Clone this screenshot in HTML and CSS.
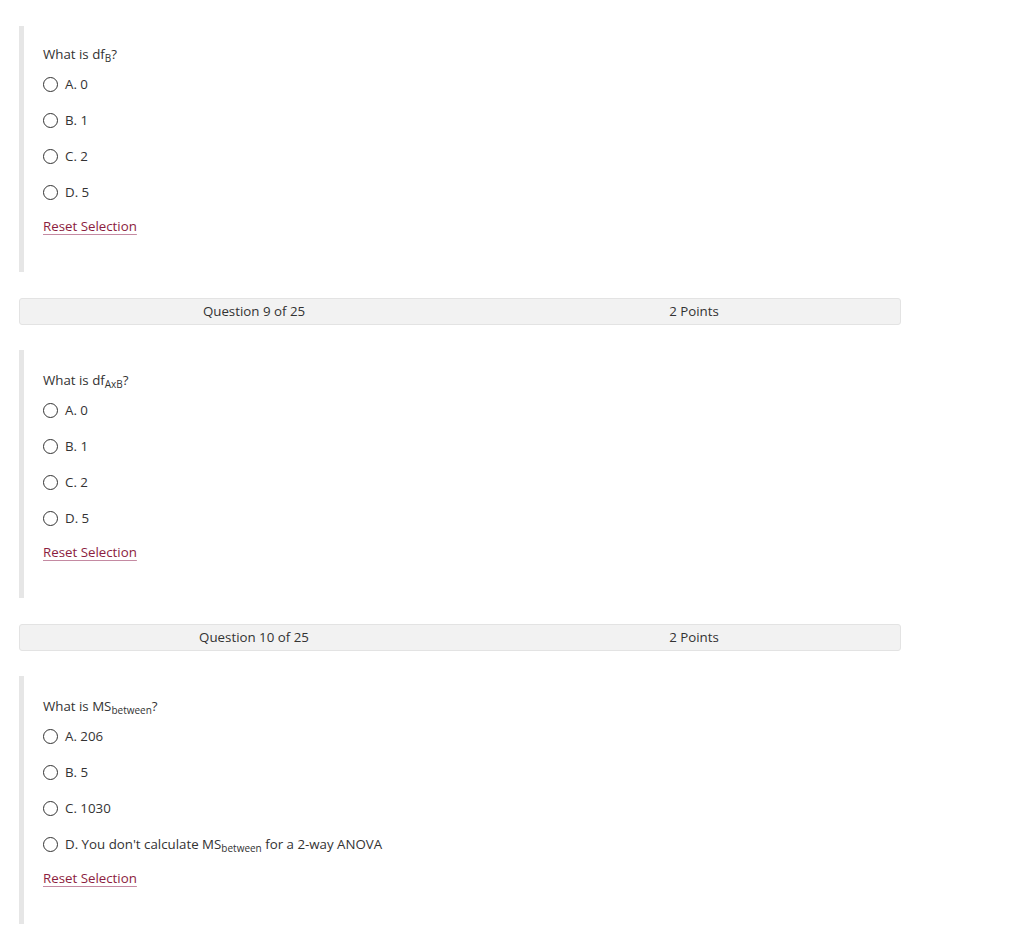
FILE: index.html
```html
<!DOCTYPE html>
<html lang="en">
    <head>
        <meta charset="utf-8">
        <title>Quiz</title>
        <link rel="stylesheet" href="styles.css">
    </head>
    <body>
        <main class="quiz">

            <section class="question">
                <p class="prompt">What is df<sub>B</sub>?</p>
                <ul class="choices">
                    <li><span class="radio"></span><span>A. 0</span></li>
                    <li><span class="radio"></span><span>B. 1</span></li>
                    <li><span class="radio"></span><span>C. 2</span></li>
                    <li><span class="radio"></span><span>D. 5</span></li>
                </ul>
                <a class="reset" href="#">Reset Selection</a>
            </section>

            <div class="question-head">
                <span>Question 9 of 25</span>
                <span>2 Points</span>
            </div>

            <section class="question">
                <p class="prompt tall">What is df<sub>AxB</sub>?</p>
                <ul class="choices">
                    <li><span class="radio"></span><span>A. 0</span></li>
                    <li><span class="radio"></span><span>B. 1</span></li>
                    <li><span class="radio"></span><span>C. 2</span></li>
                    <li><span class="radio"></span><span>D. 5</span></li>
                </ul>
                <a class="reset" href="#">Reset Selection</a>
            </section>

            <div class="question-head">
                <span>Question 10 of 25</span>
                <span>2 Points</span>
            </div>

            <section class="question">
                <p class="prompt tall">What is MS<sub>between</sub>?</p>
                <ul class="choices">
                    <li><span class="radio"></span><span>A. 206</span></li>
                    <li><span class="radio"></span><span>B. 5</span></li>
                    <li><span class="radio"></span><span>C. 1030</span></li>
                    <li><span class="radio"></span><span>D. You don't calculate MS<sub>between</sub> for a 2-way ANOVA</span></li>
                </ul>
                <a class="reset" href="#">Reset Selection</a>
            </section>

        </main>
    </body>
</html>
```

FILE: styles.css
```css
body {
    margin: 0;
    background: #fff;
    color: #333;
    font-family: "Open Sans", "Liberation Sans", sans-serif;
    font-size: 13.3px;
    line-height: 20px;
}

.quiz {
    width: 882px;
    padding: 26px 0 0 19px;
    display: flex;
    flex-direction: column;
}

.question {
    border-left: 5px solid #e6e6e6;
    padding: 18px 0 36px 19px;
}

.prompt {
    margin: 0;
}

.prompt.tall {
    padding-top: 2px;
}

sub {
    font-size: 10px;
    line-height: 10px;
    vertical-align: -3px;
}

.choices {
    list-style: none;
    margin: 10px 0 0;
    padding: 0;
    display: flex;
    flex-direction: column;
    gap: 16px;
}

.choices li {
    display: flex;
    align-items: center;
    gap: 7px;
    height: 20px;
}

.radio {
    width: 15px;
    height: 15px;
    box-sizing: border-box;
    border: 1.3px solid #333;
    border-radius: 50%;
    flex-shrink: 0;
}

.reset {
    display: inline-block;
    margin-top: 14px;
    color: #8c1d40;
    text-decoration: underline;
    text-decoration-color: #c48aa2;
    text-underline-offset: 3px;
}

.question-head {
    display: grid;
    grid-template-columns: 468px 1fr;
    text-align: center;
    margin: 26px 0 25px;
    height: 25px;
    line-height: 25px;
    background: #f2f2f2;
    border: 1px solid #e3e3e3;
    border-radius: 3px;
}
```
